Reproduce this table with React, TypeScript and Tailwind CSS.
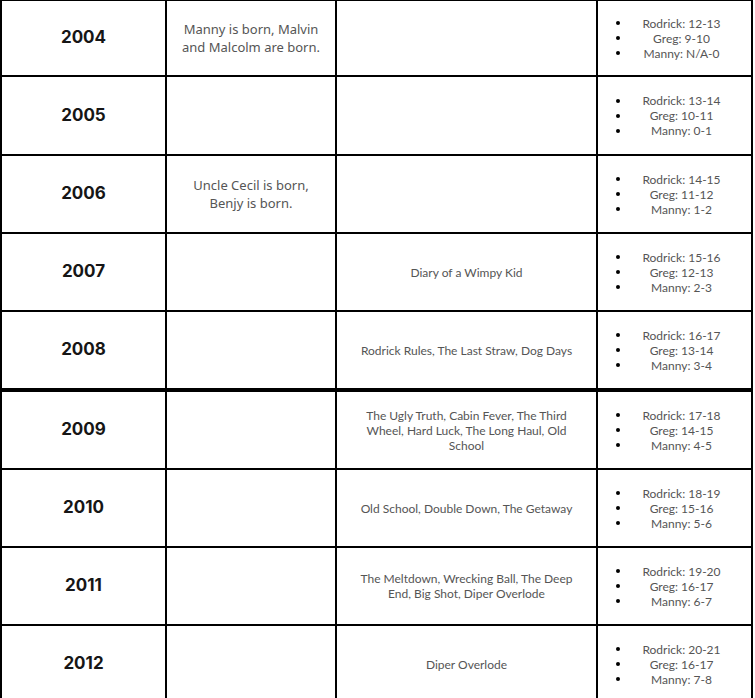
type Row = {
  year: string;
  events?: string;
  books?: string;
  ages: string[];
  h: string;
};

const firstTable: Row[] = [
  {
    year: "2004",
    events: "Manny is born, Malvin and Malcolm are born.",
    ages: ["Rodrick: 12-13", "Greg: 9-10", "Manny: N/A-0"],
    h: "h-[74px]",
  },
  { year: "2005", ages: ["Rodrick: 13-14", "Greg: 10-11", "Manny: 0-1"], h: "h-[77px]" },
  {
    year: "2006",
    events: "Uncle Cecil is born, Benjy is born.",
    ages: ["Rodrick: 14-15", "Greg: 11-12", "Manny: 1-2"],
    h: "h-[76px]",
  },
  {
    year: "2007",
    books: "Diary of a Wimpy Kid",
    ages: ["Rodrick: 15-16", "Greg: 12-13", "Manny: 2-3"],
    h: "h-[76px]",
  },
  {
    year: "2008",
    books: "Rodrick Rules, The Last Straw, Dog Days",
    ages: ["Rodrick: 16-17", "Greg: 13-14", "Manny: 3-4"],
    h: "h-[76px]",
  },
];

const secondTable: Row[] = [
  {
    year: "2009",
    books: "The Ugly Truth, Cabin Fever, The Third Wheel, Hard Luck, The Long Haul, Old School",
    ages: ["Rodrick: 17-18", "Greg: 14-15", "Manny: 4-5"],
    h: "h-[76px]",
  },
  {
    year: "2010",
    books: "Old School, Double Down, The Getaway",
    ages: ["Rodrick: 18-19", "Greg: 15-16", "Manny: 5-6"],
    h: "h-[76px]",
  },
  {
    year: "2011",
    books: "The Meltdown, Wrecking Ball, The Deep End, Big Shot, Diper Overlode",
    ages: ["Rodrick: 19-20", "Greg: 16-17", "Manny: 6-7"],
    h: "h-[76px]",
  },
  {
    year: "2012",
    books: "Diper Overlode",
    ages: ["Rodrick: 20-21", "Greg: 16-17", "Manny: 7-8"],
    h: "h-[76px]",
  },
];

const TimelineTable = ({ rows }: { rows: Row[] }) => {
  return (
    <div className="grid grid-cols-[163px_168px_259px_153px] gap-[2px] bg-black p-[2px] w-[753px]">
      {rows.map((row) => (
        <div key={row.year} className="contents">
          {/* year */}
          <div
            className={`${row.h} bg-white flex items-center justify-center text-[17px] font-bold text-[#161616] font-['Inter',sans-serif]`}
          >
            {row.year}
          </div>
          {/* family events */}
          <div className="bg-white flex items-center justify-center px-[14px] text-center text-[13px] leading-[18px] text-[#555555] font-['Noto_Sans',sans-serif]">
            {row.events}
          </div>
          {/* books */}
          <div className="bg-white flex items-center justify-center px-[22px] text-center text-[12px] leading-[15px] text-[#555555] font-['Lato',sans-serif]">
            {row.books}
          </div>
          {/* ages */}
          <div className="bg-white flex items-center">
            <ul className="w-full flex flex-col text-[12px] leading-[15px] text-[#555555] font-['Lato',sans-serif]">
              {row.ages.map((age) => (
                <li key={age} className="flex items-center">
                  <span className="ml-[18px] w-[4px] h-[4px] rounded-full bg-black"></span>
                  <span className="flex-1 text-center ml-[8px] mr-[16px]">{age}</span>
                </li>
              ))}
            </ul>
          </div>
        </div>
      ))}
    </div>
  );
};

const App = () => {
  return (
    <div className="w-[755px] h-[698px] overflow-hidden bg-white">
      <div className="mt-[-1px]">
        <TimelineTable rows={firstTable} />
        <TimelineTable rows={secondTable} />
      </div>
    </div>
  );
};

export default App;
